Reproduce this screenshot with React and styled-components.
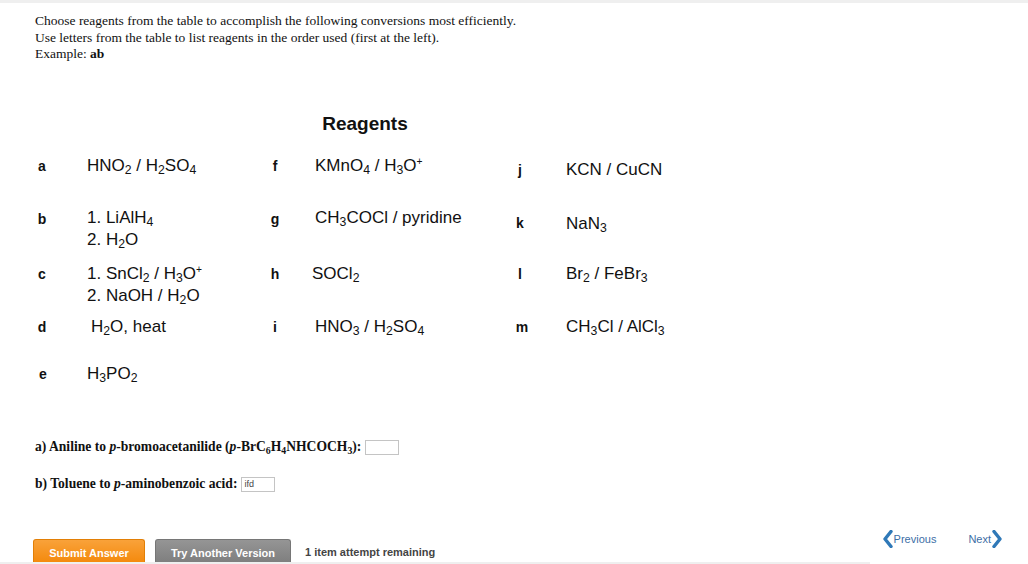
import React from "react";
import styled, { createGlobalStyle } from "styled-components";

const GlobalStyle = createGlobalStyle`
  body {
    margin: 0;
    background: #fff;
  }
`;

const Page = styled.div`
  width: 1028px;
  height: 564px;
  overflow: hidden;
  display: flex;
  flex-direction: column;
  background: #fff;
`;

const GrayBar = styled.div`
  height: ${(p) => p.h}px;
  width: ${(p) => p.w || "100%"};
  background: #efefef;
  flex-shrink: 0;
`;

const Content = styled.div`
  padding-left: 35px;
  display: flex;
  flex-direction: column;
`;

const Instructions = styled.div`
  margin-top: 10px;
  font-family: "Liberation Serif", "Times New Roman", serif;
  font-size: 13.5px;
  line-height: 16.5px;
  color: #111;
`;

const Heading = styled.div`
  margin-top: 50px;
  width: 660px;
  text-align: center;
  font-family: "Liberation Sans", Arial, sans-serif;
  font-weight: bold;
  font-size: 19px;
  line-height: 22px;
  color: #111;
`;

const ReagentGrid = styled.div`
  margin-top: 20px;
  display: grid;
  grid-template-columns: 52px 181px 47px 198px 53px auto;
  grid-template-rows: 52px 56px 53px 47px 22px;
  align-items: start;
  font-family: "Liberation Sans", Arial, sans-serif;
  color: #111;
`;

const Letter = styled.div`
  width: 14px;
  text-align: center;
  font-weight: bold;
  font-size: 14px;
  line-height: 22px;
  margin-top: ${(p) => p.shift || 0}px;
  margin-left: ${(p) => p.nudge || 0}px;
`;

const Reagent = styled.div`
  font-size: 17px;
  line-height: 22.5px;
  margin-top: ${(p) => p.shift || 0}px;
  margin-left: ${(p) => p.nudge || 0}px;
  white-space: nowrap;

  sub {
    font-size: 0.72em;
    vertical-align: -0.28em;
    line-height: 0;
  }
  sup {
    font-size: 0.6em;
    vertical-align: 0.55em;
    line-height: 0;
  }
`;

const Questions = styled.div`
  margin-top: 54px;
  display: flex;
  flex-direction: column;
  gap: 20px;
`;

const QuestionRow = styled.div`
  display: flex;
  align-items: center;
  height: 17px;
  font-family: "Liberation Serif", "Times New Roman", serif;
  font-weight: bold;
  font-size: 13.6px;
  color: #111;
  white-space: pre;

  sub {
    font-size: 0.72em;
    position: relative;
    top: 3px;
  }
`;

const AnswerBox = styled.div`
  margin-left: 4px;
  width: 34px;
  height: 15px;
  box-sizing: border-box;
  border: 1px solid #c4c4c4;
  font-family: "Liberation Sans", Arial, sans-serif;
  font-weight: normal;
  font-size: 9px;
  line-height: 13px;
  padding-left: 2px;
  color: #444;
`;

const Footer = styled.div`
  margin-top: 37px;
  padding-left: 33px;
  padding-right: 26px;
  display: flex;
  justify-content: space-between;
  align-items: flex-start;
  height: 32px;
`;

const ButtonRow = styled.div`
  margin-top: 9px;
  display: flex;
  align-items: center;
  gap: 10px;
`;

const Button = styled.div`
  height: 23px;
  width: ${(p) => p.w}px;
  box-sizing: border-box;
  border: 1px solid ${(p) => (p.primary ? "#e27f06" : "#767676")};
  border-bottom: none;
  border-radius: 3px 3px 0 0;
  background: ${(p) =>
    p.primary
      ? "linear-gradient(#f9a23a, #f48a0e)"
      : "linear-gradient(#959595, #7f7f7f)"};
  color: #fff;
  font-family: "Liberation Sans", Arial, sans-serif;
  font-weight: bold;
  font-size: 11px;
  display: flex;
  align-items: center;
  justify-content: center;
  padding-top: 4px;
`;

const Remaining = styled.div`
  margin-left: 4px;
  padding-top: 4px;
  font-family: "Liberation Sans", Arial, sans-serif;
  font-weight: bold;
  font-size: 11px;
  color: #444;
`;

const Nav = styled.div`
  display: flex;
  align-items: center;
  gap: 32px;
`;

const NavLink = styled.div`
  display: flex;
  align-items: center;
  gap: 1px;
  font-family: "Liberation Sans", Arial, sans-serif;
  font-size: 11px;
  color: #3d6ea6;
`;

const Chevron = ({ dir }) => (
  <svg width="10" height="18" viewBox="0 0 10 18">
    <path
      d={dir === "left" ? "M8 1.5 L2 9 L8 16.5" : "M2 1.5 L8 9 L2 16.5"}
      fill="none"
      stroke="#2f79b8"
      strokeWidth="3.4"
      strokeLinecap="round"
      strokeLinejoin="round"
    />
  </svg>
);

export default function App() {
  return (
    <Page>
      <GlobalStyle />
      <GrayBar h={3} />
      <Content>
        <Instructions>
          Choose reagents from the table to accomplish the following conversions most efficiently.
          <br />
          Use letters from the table to list reagents in the order used (first at the left).
          <br />
          Example: <b>ab</b>
        </Instructions>

        <Heading>Reagents</Heading>

        <ReagentGrid>
          <Letter>a</Letter>
          <Reagent>
            HNO<sub>2</sub> / H<sub>2</sub>SO<sub>4</sub>
          </Reagent>
          <Letter>f</Letter>
          <Reagent>
            KMnO<sub>4</sub> / H<sub>3</sub>O<sup>+</sup>
          </Reagent>
          <Letter shift={4}>j</Letter>
          <Reagent shift={4}>KCN / CuCN</Reagent>

          <Letter shift={1}>b</Letter>
          <Reagent>
            1. LiAlH<sub>4</sub>
            <br />
            2. H<sub>2</sub>O
          </Reagent>
          <Letter shift={1}>g</Letter>
          <Reagent>
            CH<sub>3</sub>COCl / pyridine
          </Reagent>
          <Letter shift={5}>k</Letter>
          <Reagent shift={6}>
            NaN<sub>3</sub>
          </Reagent>

          <Letter>c</Letter>
          <Reagent>
            1. SnCl<sub>2</sub> / H<sub>3</sub>O<sup>+</sup>
            <br />
            2. NaOH / H<sub>2</sub>O
          </Reagent>
          <Letter>h</Letter>
          <Reagent nudge={-3}>
            SOCl<sub>2</sub>
          </Reagent>
          <Letter>l</Letter>
          <Reagent>
            Br<sub>2</sub> / FeBr<sub>3</sub>
          </Reagent>

          <Letter>d</Letter>
          <Reagent nudge={4}>
            H<sub>2</sub>O, heat
          </Reagent>
          <Letter>i</Letter>
          <Reagent>
            HNO<sub>3</sub> / H<sub>2</sub>SO<sub>4</sub>
          </Reagent>
          <Letter nudge={2}>m</Letter>
          <Reagent>
            CH<sub>3</sub>Cl / AlCl<sub>3</sub>
          </Reagent>

          <Letter nudge={1}>e</Letter>
          <Reagent>
            H<sub>3</sub>PO<sub>2</sub>
          </Reagent>
        </ReagentGrid>

        <Questions>
          <QuestionRow>
            a) Aniline to <i>p</i>-bromoacetanilide (<i>p</i>-BrC<sub>6</sub>H<sub>4</sub>NHCOCH<sub>3</sub>):
            <AnswerBox />
          </QuestionRow>
          <QuestionRow>
            b) Toluene to <i>p</i>-aminobenzoic acid:
            <AnswerBox>ifd</AnswerBox>
          </QuestionRow>
        </Questions>
      </Content>

      <Footer>
        <ButtonRow>
          <Button primary w={112}>Submit Answer</Button>
          <Button w={136}>Try Another Version</Button>
          <Remaining>1 item attempt remaining</Remaining>
        </ButtonRow>
        <Nav>
          <NavLink>
            <Chevron dir="left" />
            Previous
          </NavLink>
          <NavLink>
            Next
            <Chevron dir="right" />
          </NavLink>
        </Nav>
      </Footer>
      <GrayBar h={2} w="870px" />
    </Page>
  );
}
